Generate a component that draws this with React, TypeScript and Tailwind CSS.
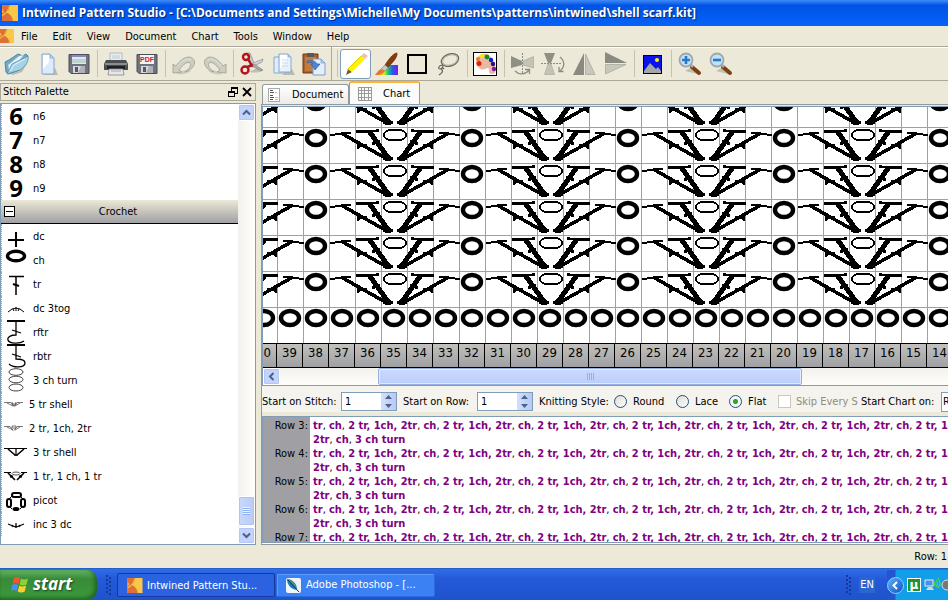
import React from 'react';

type IconProps = { className?: string };

const CELL = 26;
const ROW = 36;
const COLUMNS = Array.from({ length: 60 }, (_, i) => 40 - i).filter((n) => n > 0);

/* ---------- logos ---------- */

const AppLogo: React.FC<IconProps> = ({ className }) => (
  <svg viewBox="0 0 16 16" className={className} aria-hidden="true">
    <rect width="16" height="16" fill="#fbc748" />
    <path d="M0 0h8L6.500 5 3 8 0 4z" fill="#e07038" />
    <path d="M0 4.500L3.500 8 0 11z" fill="#f7a648" />
    <path d="M4 8.500C7 8.500 9.500 11 10 16H0V11.500z" fill="#e07038" />
    <path d="M8 0C6 4 3 7 0 9M3.500 8C7 8 10 11.500 10.500 16" fill="none" stroke="#a8541f" strokeWidth=".6" />
    <path d="M8 0L4 8" stroke="#fbc748" strokeWidth=".8" />
  </svg>
);

const WindowsFlag: React.FC<IconProps> = ({ className }) => (
  <svg viewBox="0 0 20 20" className={className} aria-hidden="true">
    <path d="M4 3c2-1.500 4-1.500 6 0L8.500 9c-2-1.400-4-1.400-6 0z" fill="#f0562a" />
    <path d="M11 3.500c2 1.200 4 1.200 7 0L16.500 9.500c-2 1.200-5 1.200-7 0z" fill="#8ccf3c" />
    <path d="M2.200 10c2-1.400 4-1.400 6 0L6.700 16c-2-1.400-4-1.400-6 0z" fill="#4b8df0" />
    <path d="M9.200 10.500c2 1.200 4 1.200 7 0L14.700 16.500c-2 1.200-5 1.200-7 0z" fill="#fbd02d" />
  </svg>
);

/* ---------- toolbar icons ---------- */

const Icon: React.FC<{ children: React.ReactNode }> = ({ children }) => (
  <svg viewBox="0 0 26 26" className="h-[26px] w-[26px] shrink-0" fill="none" aria-hidden="true">
    {children}
  </svg>
);

const OpenIcon = () => (
  <Icon>
    <path d="M3 22l13-2 8-9-6 10-9 3z" fill="#000" opacity=".2" />
    <path d="M1 11L5 9 14 3l3 1v2l5-3 2 2-8 14-12 4-2-2z" fill="#6fa9c4" stroke="#4c87a4" />
    <path d="M4 14L15 5l5-1L9 17l-4 3z" fill="#eef6fa" stroke="#8db8cc" strokeWidth=".6" />
    <path d="M3 23L8 13 24 5c1 5-2 10-8 14z" fill="#a5d3e6" stroke="#4c8fae" strokeWidth=".8" />
    <path d="M6 20l4-6 11-6" stroke="#dff3fb" />
  </Icon>
);

const NewIcon = () => (
  <Icon>
    <path d="M9 24h14l-3-7z" fill="#000" opacity=".2" />
    <path d="M7 3h8l4 4v16H7z" fill="#dcebfb" stroke="#86a6cf" />
    <path d="M8 4h6v7L8 18z" fill="#fff" />
    <path d="M15 3v4h4z" fill="#b7d0ee" stroke="#86a6cf" strokeWidth=".7" />
  </Icon>
);

const DiskIcon: React.FC<{ label?: string }> = ({ label }) => (
  <Icon>
    <path d="M3 3.500h20v19H5l-2-2z" fill="#6e737d" stroke="#4b4f58" />
    <rect x="6" y="4" width="14" height="9" fill={label ? '#f4f2f2' : '#e2e7ef'} />
    {label ? (
      <text x="13" y="11" textAnchor="middle" fontSize="7" fontWeight="700" fill="#d02020" fontFamily="Liberation Sans, sans-serif">
        {label}
      </text>
    ) : (
      <>
        <path d="M6 4h14v2H6z" fill="#8d86c8" />
        <path d="M6 9h14M6 11h14" stroke="#9cbfae" />
      </>
    )}
    <rect x="7" y="15" width="12" height="7" fill="#d6d8dc" />
    <rect x="9" y="16" width="3" height="5" fill="#555a63" />
    <path d="M15 15l4 0v7h-7z" fill="#aeb1b8" />
  </Icon>
);

const PrintIcon = () => (
  <Icon>
    <path d="M7 2h12v9H7z" fill="#e9eef2" stroke="#a6abb0" strokeWidth=".8" />
    <path d="M9 5h8M9 7h8" stroke="#c0c8cf" />
    <path d="M3 9h20l2 4v6H1v-6z" fill="#4c4f52" />
    <path d="M2 12h22v2H2z" fill="#8b8e91" />
    <path d="M4 15h18v3H4z" fill="#1f2022" />
    <path d="M6 18h14l1 6H5z" fill="#e5e6e7" stroke="#84878a" strokeWidth=".8" />
    <path d="M8 20h10" stroke="#aaa" />
  </Icon>
);

const UndoIcon: React.FC<{ flip?: boolean }> = ({ flip }) => (
  <Icon>
    <g transform={flip ? 'translate(26 0) scale(-1 1)' : undefined}>
      <path d="M5 23c5 1 11 0 15-3l-6-1z" fill="#000" opacity=".12" />
      <path
        d="M2 13v9l9-1-3-2c4-6 9-9 11-7 2 2-1 6-5 9 8-2 11-9 9-12-3-5-11-4-18 6z"
        fill="#cdcdc1"
        stroke="#a4a498"
        strokeWidth=".9"
      />
      <path d="M7 15c4-6 10-8 13-6" stroke="#e4e3d8" />
    </g>
  </Icon>
);

const CutIcon = () => (
  <Icon>
    <path d="M10 21c5 1 11 1 14-2l-6-2z" fill="#000" opacity=".18" />
    <path d="M8 2l3 0 5 13-3 0z" fill="#c9cdd1" stroke="#777c82" strokeWidth=".6" />
    <path d="M24 8l-1 3-10 5-3-2z" fill="#d4d7da" stroke="#777c82" strokeWidth=".6" />
    <path d="M24 19l-9-6-2 2 9 5z" fill="#a7abb0" stroke="#777c82" strokeWidth=".6" />
    <ellipse cx="7" cy="6" rx="3" ry="3" stroke="#b3141c" strokeWidth="2.400" />
    <ellipse cx="6" cy="19" rx="3.500" ry="3.500" stroke="#b3141c" strokeWidth="2.400" />
    <path d="M9 8l4 7M8 16l6-2" stroke="#b3141c" strokeWidth="2.400" />
  </Icon>
);

const CopyIcon = () => (
  <Icon>
    <path d="M12 24h13l-3-6z" fill="#000" opacity=".2" />
    <path d="M4 6h9l3 3v13H4z" fill="#dfecfa" stroke="#87a7cf" />
    <path d="M9 3h9l3 3v15H9z" fill="#e9f3fd" stroke="#87a7cf" />
    <path d="M10 4h7v5l-7 8z" fill="#fff" />
    <path d="M18 3v3h3z" fill="#b7d0ee" stroke="#87a7cf" strokeWidth=".7" />
    <path d="M12 9h6M12 12h6M12 15h6" stroke="#c7daf0" />
  </Icon>
);

const PasteIcon = () => (
  <Icon>
    <path d="M2 3h15v19H2z" fill="#a8622c" stroke="#70390f" />
    <path d="M4 6h11v14H4z" fill="#c27b42" />
    <path d="M6 2h7v4H6z" fill="#55585c" />
    <path d="M12 8h8l4 4v12H12z" fill="#e4effb" stroke="#7f9fca" />
    <path d="M20 8v4h4z" fill="#b7d0ee" stroke="#7f9fca" strokeWidth=".7" />
    <path d="M6 10c5-1 9 0 10 3h3l-5 6-4-6h2c-1-2-3-2-6-1z" fill="#4f86d4" stroke="#2e5fa8" strokeWidth=".7" />
  </Icon>
);

const PencilIcon = () => (
  <Icon>
    <path d="M3 24l2-6 4 3z" fill="#6b6420" />
    <path d="M5 18L18 5l4 3L9 21z" fill="#fff200" />
    <path d="M5 18L18 5" stroke="#d9cc00" />
    <path d="M18 5l3-3 4 3-3 3z" fill="#f2bfa8" />
  </Icon>
);

const BrushIcon = () => (
  <Icon>
    <defs>
      <linearGradient id="rainbow" x1="0" x2="1">
        <stop offset="0" stopColor="#f03010" />
        <stop offset=".2" stopColor="#ffb000" />
        <stop offset=".4" stopColor="#d0f020" />
        <stop offset=".55" stopColor="#20d060" />
        <stop offset=".75" stopColor="#2060f0" />
        <stop offset="1" stopColor="#9010e0" />
      </linearGradient>
    </defs>
    <path d="M1 24l9-5 5-5h9v10z" fill="url(#rainbow)" />
    <path d="M11 14C16 6 20 2 23 2c1 3-4 10-9 14z" fill="#8a3a10" stroke="#5f2405" strokeWidth=".6" />
    <path d="M11 14l3 3-3 3-4-2z" fill="#c8c8c0" stroke="#77776f" strokeWidth=".5" />
    <path d="M7 18l4 2c-2 3-6 4-10 4 2-2 3-5 6-6z" fill="#e8743c" />
  </Icon>
);

const RectIcon = () => (
  <Icon>
    <rect x="3" y="4" width="18" height="18" stroke="#000" strokeWidth="2" />
  </Icon>
);

const LassoIcon = () => (
  <Icon>
    <g stroke="#66665f" strokeWidth="1.200">
      <ellipse cx="14" cy="9" rx="9" ry="6" transform="rotate(-20 14 9)" />
      <ellipse cx="14" cy="9" rx="7.600" ry="4.800" transform="rotate(-20 14 9)" stroke="#a5a59b" strokeWidth=".7" />
      <path d="M6 14c-4 1-4 4-2 4s4-3 2-4zM5 18c3 2 1 4-2 6M6 16l2 2" />
    </g>
  </Icon>
);

const PaletteIcon = () => (
  <Icon>
    <rect x=".5" y="1.500" width="23" height="23" fill="#fff" stroke="#000" />
    <path d="M3 12C3 6 8 2 13 3c6 2 11 9 9 19-3 2-6 1-6-2 1-3-1-4-4-2-4 2-8-2-9-6z" fill="#e6b9a0" />
    <circle cx="5" cy="8" r="2" fill="#f07820" />
    <circle cx="6" cy="12.500" r="2.500" fill="#e81c10" />
    <circle cx="9" cy="5" r="2" fill="#ffe600" />
    <circle cx="14" cy="6" r="2.400" fill="#168c20" />
    <circle cx="18" cy="9" r="2.200" fill="#1018d8" />
    <circle cx="20" cy="13" r="2.200" fill="#1a1090" />
    <circle cx="21" cy="18" r="2.200" fill="#7c18a8" />
  </Icon>
);

const FlipVIcon = () => (
  <Icon>
    <path d="M12.500 2v20" stroke="#8d8d84" strokeDasharray="2 1" />
    <path d="M1 5l11 5v4L1 17z" fill="#8f8f86" />
    <path d="M23.500 5.500L13 10v4l10.500 3z" fill="#c3c3b7" stroke="#a1a196" strokeWidth=".6" />
    <path d="M5 20c4 4 10 4 14-1M15 18.500l4.500 0 0 4.500" stroke="#8d8d84" strokeWidth="1.300" />
  </Icon>
);

const FlipHIcon = () => (
  <Icon>
    <path d="M0 12.500h20" stroke="#8d8d84" strokeDasharray="2 1" />
    <path d="M3 2h11l-4 10H7z" fill="#8f8f86" />
    <path d="M3.500 23.500h10L10 13H7z" fill="#c3c3b7" stroke="#a1a196" strokeWidth=".6" />
    <path d="M19 6c5 4 5 10 0 14M18 16v4.500h4.500" stroke="#8d8d84" strokeWidth="1.300" />
  </Icon>
);

const MirrorIcon: React.FC<{ vertical?: boolean }> = ({ vertical }) => (
  <Icon>
    <g transform={vertical ? 'rotate(90 13 13)' : undefined}>
      <path d="M12 2v22H1z" fill="#8a8a81" />
      <path d="M13.500 3v20.500h9.500z" fill="#c7c7bb" stroke="#a3a398" strokeWidth=".7" />
    </g>
  </Icon>
);

const PictureIcon = () => (
  <Icon>
    <rect x="3.500" y="4.500" width="18" height="18" fill="#0a14e8" stroke="#000" />
    <circle cx="17" cy="9" r="2" fill="#fff200" />
    <path d="M4 20l6-8 6 6 2-2 3 4v2H4z" fill="#a6a6a6" />
  </Icon>
);

const ZoomIcon: React.FC<{ plus?: boolean }> = ({ plus }) => (
  <Icon>
    <path d="M8 20l12 3 3-2-8-5z" fill="#000" opacity=".18" />
    <path d="M15 16l7 6" stroke="#7c4016" strokeWidth="4" strokeLinecap="round" />
    <path d="M13 13l3 3" stroke="#a9acb0" strokeWidth="2.500" />
    <circle cx="9" cy="9" r="6.500" fill="#bfe2f9" stroke="#a0a6aa" strokeWidth="1.800" />
    <path d={plus ? 'M5 9h8M9 5v8' : 'M5 9h8'} stroke="#2878c8" strokeWidth="2.600" />
  </Icon>
);

const Tool: React.FC<{ label: string; active?: boolean; disabled?: boolean; children: React.ReactNode }> = ({
  label,
  active,
  disabled,
  children,
}) => (
  <button
    type="button"
    aria-label={label}
    disabled={disabled}
    className={`flex h-[30px] w-[31px] shrink-0 items-center justify-center rounded-[3px] border ${
      active ? 'border-[#7f9db9] bg-white' : 'border-transparent'
    }`}
  >
    {children}
  </button>
);

const Separator = () => (
  <div className="flex w-[6px] shrink-0 justify-center" aria-hidden="true">
    <div className="h-[27px] w-px bg-[#c5c2b2]" />
  </div>
);

const Toolbar = () => (
  <div className="flex h-[35px] shrink-0 items-center overflow-hidden border-y border-[#aca899] pl-[1px] shadow-[inset_0_1px_0_#fff]" role="toolbar">
    <Tool label="Open"><OpenIcon /></Tool>
    <Tool label="New"><NewIcon /></Tool>
    <Tool label="Save"><DiskIcon /></Tool>
    <Separator />
    <Tool label="Print"><PrintIcon /></Tool>
    <Tool label="Export PDF"><DiskIcon label="PDF" /></Tool>
    <Separator />
    <Tool label="Undo" disabled><UndoIcon /></Tool>
    <Tool label="Redo" disabled><UndoIcon flip /></Tool>
    <Separator />
    <Tool label="Cut"><CutIcon /></Tool>
    <Tool label="Copy"><CopyIcon /></Tool>
    <Tool label="Paste"><PasteIcon /></Tool>
    <div className="mx-[2px] h-full w-px shrink-0 bg-[#aca899]" />
    <Separator />
    <Tool label="Pencil" active><PencilIcon /></Tool>
    <Tool label="Brush"><BrushIcon /></Tool>
    <Tool label="Rectangle"><RectIcon /></Tool>
    <Tool label="Lasso"><LassoIcon /></Tool>
    <Separator />
    <Tool label="Colors"><PaletteIcon /></Tool>
    <Separator />
    <Tool label="Rotate vertically" disabled><FlipVIcon /></Tool>
    <Tool label="Rotate horizontally" disabled><FlipHIcon /></Tool>
    <Tool label="Mirror horizontally" disabled><MirrorIcon /></Tool>
    <Tool label="Mirror vertically" disabled><MirrorIcon vertical /></Tool>
    <Separator />
    <Tool label="Insert image"><PictureIcon /></Tool>
    <Separator />
    <Tool label="Zoom in"><ZoomIcon plus /></Tool>
    <Tool label="Zoom out"><ZoomIcon /></Tool>
  </div>
);

/* ---------- stitch palette ---------- */

const Stitch: React.FC<{ narrow?: boolean; children: React.ReactNode }> = ({ narrow, children }) => (
  <svg
    viewBox={narrow ? '0 0 20 24' : '0 0 24 24'}
    className={narrow ? 'h-6 w-5 shrink-0' : 'h-6 w-6 shrink-0'}
    fill="none"
    stroke="#000"
    aria-hidden="true"
  >
    {children}
  </svg>
);

const Digit: React.FC<{ n: number }> = ({ n }) => (
  <span className="w-6 shrink-0 text-center font-['Noto_Sans'] text-[24px] leading-6 font-bold" aria-hidden="true">
    {n}
  </span>
);

const NUMBERS = [6, 7, 8, 9];

const STITCHES: { name: string; icon: React.ReactNode }[] = [
  { name: 'dc', icon: <Stitch><path d="M12 8v15M4 16h16" strokeWidth="2" /></Stitch> },
  { name: 'ch', icon: <Stitch><ellipse cx="12" cy="8" rx="8.500" ry="4.800" strokeWidth="3.400" /></Stitch> },
  { name: 'tr', icon: <Stitch><path d="M5 4.500h15M12 4v19" strokeWidth="1.500" /><path d="M9 12l6 2" strokeWidth="2" /></Stitch> },
  { name: 'dc 3tog', icon: <Stitch><path d="M4 16l4-3 4-1 4 1 4 3M12 11v4M9 13l1 2M15 13l-1 2" strokeWidth="1" /></Stitch> },
  { name: 'rftr', icon: <Stitch><path d="M3 1h18" strokeWidth="2" /><path d="M12 1v14c-5 0-9 2-8 5 1 4 12 4 16 1M8 10l9 3" strokeWidth="1.300" /></Stitch> },
  { name: 'rbtr', icon: <Stitch><path d="M3 1h18" strokeWidth="2" /><path d="M12 1v14c5 0 9 1 9 4 0 5-12 5-16 1M8 10l9 3" strokeWidth="1.300" /></Stitch> },
  {
    name: '3 ch turn',
    icon: (
      <Stitch>
        <g stroke="#444">
          <ellipse cx="12" cy="4" rx="7" ry="3.300" />
          <ellipse cx="12" cy="11.500" rx="7" ry="3.300" />
          <ellipse cx="12" cy="19.500" rx="7" ry="3.500" />
        </g>
      </Stitch>
    ),
  },
  {
    name: '5 tr shell',
    icon: <Stitch narrow><path d="M0 10.500h7l3 4 3-4h6M3 11l6 3M8 10l1.500 4M12 10l-1.500 4M16 11l-5 3M7 12h6" stroke="#555" strokeWidth=".8" /></Stitch>,
  },
  {
    name: '2 tr, 1ch, 2tr',
    icon: <Stitch narrow><path d="M0 10.500h6l3 4M3 11l6 3M19 10.500h-6l-3 4M16 11l-5 3M8 10h4v2H8z" stroke="#555" strokeWidth=".8" /></Stitch>,
  },
  {
    name: '3 tr shell',
    icon: <Stitch><path d="M0 8.500h9M14 8.500h9M12 8v8M9 8.500h6" strokeWidth="1.200" /><path d="M4 9l7 6M20 9l-7 6M10 15h4" strokeWidth="1.600" /></Stitch>,
  },
  {
    name: '1 tr, 1 ch, 1 tr',
    icon: <Stitch><path d="M0 8.500h7M17 8.500h6" strokeWidth="1.200" /><path d="M4 9l7 7M20 9l-7 7M6 13l3-1M18 13l-3-1" strokeWidth="1.600" /><ellipse cx="12" cy="9.500" rx="4" ry="1.500" stroke="#555" /></Stitch>,
  },
  {
    name: 'picot',
    icon: (
      <Stitch>
        <g strokeWidth="2">
          <rect x="8" y="5" width="9" height="4" rx="2" />
          <rect x="3" y="11" width="4" height="8" rx="2" />
          <rect x="17" y="11" width="4" height="8" rx="2" />
          <path d="M8 8l-3 3M16 8l3 3M6 19l2 2M18 19l-2 2" strokeWidth="1" />
        </g>
        <ellipse cx="12" cy="21" rx="3.500" ry="2" fill="#000" stroke="none" />
      </Stitch>
    ),
  },
  { name: 'inc 3 dc', icon: <Stitch><path d="M4 12l5 2 3 1 3-1 5-2M12 11v5M8 15l1-2M15 13l1 2" strokeWidth="1.300" /></Stitch> },
];

const StitchRow: React.FC<{ name: string; icon: React.ReactNode }> = ({ name, icon }) => (
  <li className="flex h-6 items-center gap-[5px] border-l border-dotted border-[#aca899] pl-[2px]">
    {icon}
    <span className="pt-[2px] whitespace-nowrap">{name}</span>
  </li>
);

const ScrollButton: React.FC<{ label: string; d: string }> = ({ label, d }) => (
  <button
    type="button"
    aria-label={label}
    className="flex h-[17px] w-[17px] shrink-0 items-center justify-center rounded-[2px] border border-white bg-[#c3d3fd] shadow-[inset_0_0_0_1px_#b4c8f6]"
  >
    <svg viewBox="0 0 9 9" className="h-[9px] w-[9px]" fill="none" stroke="#4d6185" strokeWidth="2" aria-hidden="true">
      <path d={d} />
    </svg>
  </button>
);

const StitchPalette = () => (
  <aside className="flex w-64 shrink-0 flex-col">
    <div className="mt-[2px] flex h-[18px] items-center border border-[#aca899] pr-px pl-[2px]">
      <h2 className="flex-1">Stitch Palette</h2>
      <button type="button" aria-label="Float" className="flex w-[14px] justify-center">
        <svg viewBox="0 0 10 10" className="h-[10px] w-[10px]" fill="none" stroke="#000" shapeRendering="crispEdges" aria-hidden="true">
          <path d="M3 1h6M3 .500h6v6H7M3 1v3M.500 4h6v5h-6zM.500 5h6" />
        </svg>
      </button>
      <button type="button" aria-label="Close" className="flex w-[14px] justify-center">
        <svg viewBox="0 0 10 10" className="h-[10px] w-[10px]" fill="none" stroke="#000" strokeWidth="1.800" aria-hidden="true">
          <path d="M1 1l8 8M9 1L1 9" />
        </svg>
      </button>
    </div>
    <div className="mt-[2px] flex min-h-0 flex-1 border border-[#7f9db9] bg-white">
      <div className="min-w-0 flex-1">
        <ul>
          {NUMBERS.map((n) => (
            <StitchRow key={n} name={`n${n}`} icon={<Digit n={n} />} />
          ))}
        </ul>
        <div className="flex h-6 items-center border-b border-black bg-linear-to-b from-[#ece9d8] to-[#a0a0a4] pr-[17px] pl-[3px]">
          <button type="button" aria-label="Collapse Crochet" className="flex h-[11px] w-[11px] items-center justify-center border border-black bg-white">
            <span className="h-px w-[7px] bg-black" />
          </button>
          <h3 className="flex-1 text-center">Crochet</h3>
        </div>
        <ul>
          {STITCHES.map((s) => (
            <StitchRow key={s.name} name={s.name} icon={s.icon} />
          ))}
        </ul>
      </div>
      <div className="flex w-[17px] flex-col bg-linear-to-r from-[#f3f1ec] to-[#fefefb]">
        <ScrollButton label="Scroll up" d="M1 6.500L4.500 3 8 6.500" />
        <div className="flex-1" />
        <div className="mb-px flex h-[30px] flex-col items-center justify-center gap-px rounded-[2px] border border-white bg-linear-to-r from-[#c9d8fc] to-[#b9cbf6] shadow-[inset_0_0_0_1px_#b0c4f2]">
          {[0, 1, 2, 3].map((i) => (
            <span key={i} className="h-px w-[7px] bg-[#8cb0f8] shadow-[0_-1px_0_#eef4fe]" />
          ))}
        </div>
        <ScrollButton label="Scroll down" d="M1 2.500L4.500 6 8 2.500" />
      </div>
    </div>
  </aside>
);

/* ---------- chart ---------- */

const Arm = () => (
  <>
    <path d="M1 8.500l5-1 8-1 8-1" strokeWidth="2" />
    <path d="M12 6l46 26" strokeWidth="3.500" />
    <path d="M28 20l10-2M29 17v5" strokeWidth="2" />
    <path d="M27 4.500h12l11-1" strokeWidth="2.600" />
    <path d="M40 4l20 28" strokeWidth="5" />
    <path d="M43 17l8-3" strokeWidth="3" />
    <ellipse cx="59" cy="31.500" rx="5" ry="2.500" fill="#000" stroke="none" />
  </>
);

const Shell: React.FC<{ x: number; y: number }> = ({ x, y }) => (
  <g transform={`translate(${x} ${y})`} fill="none" stroke="#000" shapeRendering="crispEdges">
    <Arm />
    <g transform="translate(132 0) scale(-1 1)">
      <Arm />
    </g>
    <rect x="55" y="3" width="22" height="10" rx="7" ry="5" strokeWidth="2" />
  </g>
);

const Chain: React.FC<{ x: number; y: number }> = ({ x, y }) => (
  <ellipse cx={x + 13} cy={y + 11} rx="9" ry="7" fill="none" stroke="#000" strokeWidth="4.400" />
);

const ROWS = [0, 1, 2, 3, 4, 5];
const REPEATS = [0, 1, 2, 3, 4, 5, 6];

const ChartCanvas = () => (
  <svg className="block h-[236px] w-full bg-white" aria-label="Stitch chart">
    <g transform="translate(-12 -16)">
      {COLUMNS.map((n, i) => (
        <rect key={n} x={(i + 1) * CELL} y="0" width="1" height="260" fill="#a0a0a4" shapeRendering="crispEdges" />
      ))}
      {ROWS.map((r) => (
        <rect key={r} x="0" y={(r + 1) * ROW} width="1600" height="1" fill="#a0a0a4" shapeRendering="crispEdges" />
      ))}
      {ROWS.map((r) =>
        REPEATS.map((k) => (
          <React.Fragment key={k}>
            <Shell x={(k * 6 - 3) * CELL} y={r * ROW} />
            <Chain x={(k * 6 + 2) * CELL} y={r * ROW} />
          </React.Fragment>
        )),
      )}
      {COLUMNS.map((n, i) => (
        <Chain key={n} x={i * CELL} y={6 * ROW} />
      ))}
    </g>
  </svg>
);

const ColumnHeader = () => (
  <div className="flex overflow-hidden border-y border-black bg-linear-to-b from-[#c2c1be] to-[#a0a0a4]">
    <div className="-ml-3 flex">
      {COLUMNS.map((n) => (
        <span key={n} className="h-[23px] w-[26px] shrink-0 border-r border-black text-center text-[13px] leading-[18px]">
          {n}
        </span>
      ))}
    </div>
  </div>
);

/* ---------- options under the chart ---------- */

const Spin: React.FC<{ id: string; label: string; labelClass: string }> = ({ id, label, labelClass }) => (
  <>
    <label htmlFor={id} className={`shrink-0 whitespace-nowrap ${labelClass}`}>
      {label}
    </label>
    <div className="mr-[6px] flex h-[19px] w-[56px] shrink-0 border border-[#7f9db9] bg-white">
      <input id={id} type="text" defaultValue="1" className="w-[39px] pl-[3px] outline-none" />
      <div className="flex w-[15px] flex-col bg-linear-to-r from-[#d3dffd] to-[#b6c9f6]">
        <button type="button" aria-label={`${label} up`} className="flex flex-1 items-center justify-center">
          <svg viewBox="0 0 7 4" className="h-1 w-[7px]" aria-hidden="true"><path d="M0 4L3.500 0 7 4z" fill="#4d6185" /></svg>
        </button>
        <button type="button" aria-label={`${label} down`} className="flex flex-1 items-center justify-center">
          <svg viewBox="0 0 7 4" className="h-1 w-[7px]" aria-hidden="true"><path d="M0 0L3.500 4 7 0z" fill="#4d6185" /></svg>
        </button>
      </div>
    </div>
  </>
);

const Radio: React.FC<{ label: string; className: string; checked?: boolean }> = ({ label, className, checked }) => (
  <label className={`flex shrink-0 items-center gap-[6px] ${className}`}>
    <input
      type="radio"
      name="style"
      defaultChecked={checked}
      className="h-[13px] w-[13px] appearance-none rounded-full border border-[#21517f] bg-linear-to-br from-[#dcdcd7] to-white checked:bg-[radial-gradient(circle,#2fb52f_0,#21a121_2px,#f6f6f3_3px)]"
    />
    {label}
  </label>
);

const Options = () => (
  <div className="flex h-[26px] shrink-0 items-center overflow-hidden bg-[#f4f3ee] pt-[5px]">
    <Spin id="start-stitch" label="Start on Stitch:" labelClass="w-[79px]" />
    <Spin id="start-row" label="Start on Row:" labelClass="w-[74px]" />
    <span className="w-[75px] shrink-0 whitespace-nowrap">Knitting Style:</span>
    <Radio label="Round" className="w-[62px]" />
    <Radio label="Lace" className="w-[53px]" />
    <Radio label="Flat" className="w-[49px]" checked />
    <label className="flex w-[83px] shrink-0 items-center gap-[5px] whitespace-nowrap text-[#8f8c80]">
      <input type="checkbox" disabled className="h-[13px] w-[13px] shrink-0 appearance-none border border-[#cac8bb] bg-white" />
      Skip Every S
    </label>
    <label htmlFor="chart-side" className="w-[80px] shrink-0 whitespace-nowrap">
      Start Chart on:
    </label>
    <select id="chart-side" className="h-[20px] w-[60px] shrink-0 appearance-none border border-[#7f9db9] bg-white pl-px">
      <option>RS</option>
      <option>WS</option>
    </select>
  </div>
);

/* ---------- written pattern ---------- */

const B: React.FC<{ children: React.ReactNode }> = ({ children }) => <b className="font-bold text-[#800080]">{children}</b>;

const PatternText = () => (
  <div className="min-h-0 flex-1 overflow-hidden border-y border-l border-[#7f9db9] bg-linear-to-r from-[#a0a0a4] from-[47px] to-white to-[47px] pt-[2px]">
    {[3, 4, 5, 6, 7].map((row) => (
      <div key={row} className="flex h-7 leading-[14px]">
        <div className="w-[47px] shrink-0 pr-[2px] text-right whitespace-nowrap">Row {row}:</div>
        <div className="pl-[3px]">
          <p className="whitespace-nowrap">
            <B>tr</B>,{' '}
            {Array.from({ length: 8 }, (_, i) => (
              <React.Fragment key={i}>
                <B>ch</B>, <B>2 tr, 1ch, 2tr</B>,{' '}
              </React.Fragment>
            ))}
          </p>
          <p className="whitespace-nowrap">
            <B>2tr</B>, <B>ch</B>, <B>3 ch turn</B>
          </p>
        </div>
      </div>
    ))}
  </div>
);

const Workspace = () => (
  <section className="flex min-w-0 flex-1 flex-col">
    <div className="flex h-[23px] items-end pl-px" role="tablist">
      <button
        type="button"
        role="tab"
        aria-selected="false"
        className="flex h-[20px] w-[87px] items-center gap-3 rounded-t-[3px] border border-b-0 border-[#919b9c] bg-linear-to-b from-white to-[#ecebe6] pl-[5px]"
      >
        <svg viewBox="0 0 12 14" className="h-[14px] w-[12px]" fill="none" aria-hidden="true">
          <rect x=".5" y=".5" width="11" height="13" fill="#fff" stroke="#aaa" />
          <path d="M2 2.500h3M2 4.500h4M2 7.500h3M2 9.500h4M2 11.500h3" stroke="#555" />
          <path d="M7 4.500h2M7 9.500h3M7 11.500h3" stroke="#bbb" />
        </svg>
        Document
      </button>
      <button
        type="button"
        role="tab"
        aria-selected="true"
        className="flex h-[23px] w-[71px] items-center gap-[11px] rounded-t-[3px] border border-t-2 border-b-0 border-[#919b9c] border-t-[#ffb431] bg-[#fbfbfc] pl-[8px]"
      >
        <svg viewBox="0 0 14 14" className="h-[14px] w-[14px]" shapeRendering="crispEdges" aria-hidden="true">
          <path d="M.5 0v14M3.500 0v14M6.500 0v14M10.500 0v14M13.500 0v14M0 .5h14M0 3.500h14M0 6.500h14M0 10.500h14M0 13.500h14" stroke="#999" />
        </svg>
        Chart
      </button>
    </div>
    <div className="flex min-h-0 flex-1 flex-col border-y border-l border-[#919b9c]">
      <div className="mt-px shrink-0 border-y border-l border-[#7f9db9] bg-white">
        <ChartCanvas />
        <ColumnHeader />
        <div className="flex h-[17px] bg-linear-to-b from-[#f3f1ec] to-[#fefefb]">
          <ScrollButton label="Scroll left" d="M6.500 1L3 4.500 6.500 8" />
          <div className="ml-[98px] flex w-[424px] items-center justify-center gap-px rounded-[2px] border border-[#98b0e0] bg-linear-to-b from-[#cbd9fd] to-[#bccdfa] shadow-[inset_0_0_0_1px_#fff8]">
            {[0, 1, 2, 3].map((i) => (
              <span key={i} className="h-[7px] w-px bg-[#8cb0f8]" />
            ))}
          </div>
        </div>
      </div>
      <Options />
      <div className="h-[4px] shrink-0 bg-[#ece9d8]" />
      <PatternText />
      <div className="h-px shrink-0 bg-white" />
    </div>
  </section>
);

/* ---------- taskbar ---------- */

const Grip = () => (
  <svg viewBox="0 0 6 22" className="h-[22px] w-[6px] shrink-0" aria-hidden="true">
    {[1, 5, 9, 13, 17].map((y) => (
      <g key={y} fill="#12399c">
        <rect x="0" y={y} width="2" height="2" />
        <rect x="3" y={y + 2} width="2" height="2" />
      </g>
    ))}
  </svg>
);

const Taskbar = () => (
  <footer className="flex h-8 shrink-0 items-end overflow-hidden bg-linear-to-b from-[#1f57c4] via-[#3f8cf3] via-10% to-[#1e4fc4] to-90% text-white">
    <div className="flex h-[30px] min-w-0 flex-1 items-center bg-linear-to-b from-[#2f6be6] via-[#2459d8] via-30% to-[#1f53cc]">
      <button
        type="button"
        className="flex h-[30px] w-[97px] shrink-0 items-center gap-[3px] rounded-r-[10px] bg-linear-to-b from-[#64b463] via-[#388a38] via-30% to-[#3c9c3c] pl-[10px] shadow-[inset_-2px_-2px_4px_#1d611d]"
      >
        <WindowsFlag className="h-5 w-5" />
        <span className="pb-[2px] font-['Open_Sans'] text-[17px] leading-6 font-bold italic [text-shadow:1px_1px_2px_#1c401c]">start</span>
      </button>
      <div className="ml-[9px]"><Grip /></div>
      <button type="button" className="ml-[5px] flex h-[24px] w-[158px] shrink-0 items-center gap-[4px] rounded-[2px] border border-[#14389c] bg-[#2a62e0] pl-[9px]">
        <AppLogo className="h-[15px] w-4" />
        <span className="pt-[2px] whitespace-nowrap">Intwined Pattern Stu...</span>
      </button>
      <button type="button" className="ml-px flex h-[24px] w-[159px] shrink-0 items-center gap-[5px] rounded-[2px] border border-[#2c6ae0] bg-[#3c81f3] pl-[9px] shadow-[inset_1px_1px_0_#5c9bfa]">
        <svg viewBox="0 0 15 15" className="h-[15px] w-[15px]" aria-hidden="true">
          <rect width="15" height="15" rx="2" fill="#eef4fa" />
          <path d="M1 1c5 0 10 4 10 11C5 11 1 7 1 1z" fill="#2277bb" />
          <path d="M1 1c4 2 8 6 10 11C9 6 8 3 1 1z" fill="#58b04a" />
          <path d="M2 2l11 12" stroke="#113c63" />
        </svg>
        <span className="whitespace-nowrap">Adobe Photoshop - [...</span>
      </button>
      <div className="flex-1" />
      <Grip />
      <span className="mr-3 ml-[7px] bg-[#2b66cf] px-px leading-4">EN</span>
    </div>
    <div className="flex h-[30px] w-[61px] shrink-0 items-center bg-linear-to-r from-[#2156d0] from-[8px] to-[#139ee9] to-[9px]">
      <button type="button" aria-label="Show hidden icons" className="flex h-[17px] w-[17px] shrink-0 items-center justify-center rounded-full border border-[#9cc8f8] bg-linear-to-br from-[#5ab0f8] to-[#1352c4]">
        <svg viewBox="0 0 9 9" className="h-[9px] w-[9px]" fill="none" stroke="#fff" strokeWidth="2" aria-hidden="true">
          <path d="M6 1L2.500 4.500 6 8" />
        </svg>
      </button>
      <span className="ml-[3px] flex h-[14px] w-[14px] shrink-0 items-center justify-center border border-white bg-[#1c9430] font-['DejaVu_Sans'] text-[12px] leading-3 font-bold">µ</span>
      <svg viewBox="0 0 24 16" className="ml-[3px] h-4 w-6 shrink-0" fill="none" aria-hidden="true">
        <rect x="1" y="3" width="8" height="6" fill="#4a90e8" stroke="#e6eaf0" />
        <path d="M2 13h8l-2-3H4z" fill="#d5d9de" />
        <path d="M10 5q2 2 0 4M12 3q3 4 0 7M14 1q4 6 0 10" stroke="#57d640" strokeWidth="1.200" />
        <circle cx="23" cy="8" r="5" fill="#777" stroke="#ddd" />
      </svg>
    </div>
  </footer>
);

const MENU = ['File', 'Edit', 'View', 'Document', 'Chart', 'Tools', 'Window', 'Help'];

const App = () => (
  <div className="flex h-screen flex-col overflow-hidden bg-[#ece9d8] font-['DejaVu_Sans_Condensed','Noto_Sans',sans-serif] text-[11px] leading-[14px] text-black">
    <header className="flex h-[26px] shrink-0 items-center gap-1 bg-linear-to-b from-[#3f8cf8] via-[#0053e4] via-20% to-[#0562fb] pl-[2px] text-white">
      <AppLogo className="h-4 w-4" />
      <h1 className="font-['Open_Sans'] text-[12px] leading-5 font-bold whitespace-nowrap [text-shadow:1px_1px_1px_#0a246a]">
        Intwined Pattern Studio - [C:\Documents and Settings\Michelle\My Documents\patterns\intwined\shell scarf.kit]
      </h1>
    </header>
    <nav className="flex h-5 shrink-0 items-center">
      <AppLogo className="mr-[7px] h-[14px] w-[14px]" />
      <div className="flex gap-[15px] pt-[2px]">
        {MENU.map((item) => (
          <button key={item} type="button">{item}</button>
        ))}
      </div>
    </nav>
    <Toolbar />
    <main className="flex min-h-0 flex-1 gap-[5px]">
      <StitchPalette />
      <Workspace />
    </main>
    <div className="flex h-[23px] shrink-0 items-center justify-end pr-px">Row: 1</div>
    <Taskbar />
  </div>
);

export default App;
